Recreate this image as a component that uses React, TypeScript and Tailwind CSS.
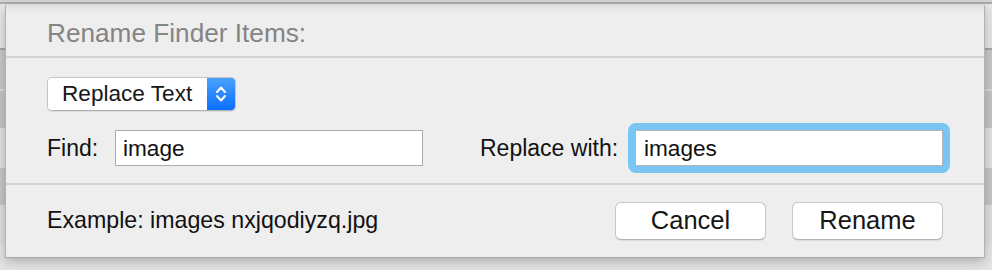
import React from "react";

const font = { fontFamily: '"Liberation Sans", Arial, sans-serif' };

function Chevrons() {
  return (
    <svg width="12" height="20" viewBox="0 0 12 20" fill="none">
      <polyline points="2,8 6,3.5 10,8" stroke="white" strokeWidth="2" strokeLinecap="round" strokeLinejoin="round" />
      <polyline points="2,12 6,16.5 10,12" stroke="white" strokeWidth="2" strokeLinecap="round" strokeLinejoin="round" />
    </svg>
  );
}

function MacButton({ label }: { label: string }) {
  return (
    <div className="flex h-[38px] w-[151px] items-center justify-center rounded-[6px] border border-[#c6c6c6] border-b-[#b4b4b4] bg-white text-[25.5px] leading-none text-[#161616] shadow-[0_1px_1px_rgba(0,0,0,0.08)]">
      {label}
    </div>
  );
}

export default function App() {
  return (
    <div className="relative h-[270px] w-[992px] overflow-hidden bg-[#e4e4e4]" style={font}>
      {/* blurred finder list behind the sheet */}
      <div className="flex flex-col">
        <div className="h-[2px] bg-[#d2d2d2]" />
        <div className="h-[2px] bg-[#a9a9a9]" />
        <div className="h-[44px] bg-[#e6e6e6]" />
        <div className="h-[2px] bg-[#a3a3a3]" />
        <div className="h-[39px] bg-[#c7c7c7]" />
        <div className="h-[2px] bg-[#dadada]" />
        <div className="h-[37px] bg-[#c3c3c3]" />
        <div className="h-[40px] bg-[#e0e0e0]" />
        <div className="h-[37px] bg-[#c6c6c6]" />
        <div className="h-[40px] bg-[#dedede]" />
        <div className="h-[25px] bg-[#e4e4e4]" />
      </div>

      {/* sheet */}
      <div className="absolute left-[5px] top-[5px] flex h-[253px] w-[980px] flex-col border border-t-0 border-[#b2b2b2] border-b-[#a6a6a6] bg-[#eeeeee] shadow-[0_4px_10px_rgba(0,0,0,0.22)]">
        {/* header */}
        <div className="h-[51px] bg-[linear-gradient(to_bottom,#dedede,#e9e9e9_5px,#eeeeee_11px)] pl-[41px] pt-[15px]">
          <div className="text-[26.2px] leading-none text-[#848484]">Rename Finder Items:</div>
        </div>
        <div className="h-[2px] bg-[#d4d4d4]" />

        {/* middle */}
        <div className="flex h-[125px] flex-col pl-[41px]">
          <div className="mt-[19px] flex h-[34px] w-[189px] overflow-hidden rounded-[5px] border border-[#c4c4c4] border-b-[#b0b0b0] shadow-[0_1px_1px_rgba(0,0,0,0.08)]">
            <div className="flex flex-1 items-center bg-white pl-[14px] text-[22.6px] leading-none text-[#161616]">
              Replace Text
            </div>
            <div className="flex w-[28px] items-center justify-center bg-[linear-gradient(to_bottom,#4aa1fe,#0b6ffd)]">
              <Chevrons />
            </div>
          </div>

          <div className="mt-[12px] flex h-[50px] items-center text-[23px] leading-none text-[#111]">
            <div className="w-[68px]">Find:</div>
            <div className="flex h-[36px] w-[308px] items-center border border-[#acacac] bg-white pl-[7px] pt-[2px] text-[22.6px]">
              image
            </div>
            <div className="ml-[57px] w-[148px]">Replace with:</div>
            <div className="flex h-[50px] w-[322px] rounded-[8px] bg-[#79c5f4] p-[7px]">
              <div className="flex h-[36px] w-[308px] items-center border border-[#b4b4b4] bg-white pl-[8px] pt-[2px] text-[22.6px]">
                images
              </div>
            </div>
          </div>
        </div>
        <div className="h-[2px] bg-[#d4d4d4]" />

        {/* footer */}
        <div className="flex flex-1 items-center pl-[41px] pr-[41px]">
          <div className="flex-1 text-[23.2px] leading-none text-[#111]">Example: images nxjqodiyzq.jpg</div>
          <div className="flex gap-[26px]">
            <MacButton label="Cancel" />
            <MacButton label="Rename" />
          </div>
        </div>
      </div>
    </div>
  );
}
